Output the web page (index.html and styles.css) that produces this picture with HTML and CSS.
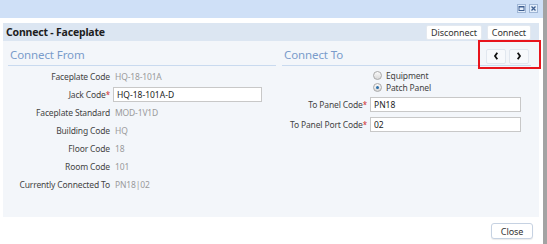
FILE: index.html
```html
<!DOCTYPE html>
<html lang="en">
<head>
    <meta charset="UTF-8">
    <meta name="viewport" content="width=device-width, initial-scale=1.0">
    <title>Connect - Faceplate</title>
    <link rel="stylesheet" href="styles.css">
</head>
<body>
    <div class="window">
        <div class="titlebar">
            <span class="win-icon">
                <svg width="9" height="9" viewBox="0 0 9 9"><rect x="0.5" y="0.5" width="8" height="8" fill="#e4eefb" stroke="#9fb6d6"/><rect x="2" y="2.5" width="5" height="4" fill="none" stroke="#3f5f91"/><rect x="2" y="2" width="5" height="1.5" fill="#3f5f91"/></svg>
            </span>
            <span class="win-icon">
                <svg width="9" height="9" viewBox="0 0 9 9"><rect x="0.5" y="0.5" width="8" height="8" fill="#e4eefb" stroke="#9fb6d6"/><path d="M2.5 2.5 L6.5 6.5 M6.5 2.5 L2.5 6.5" stroke="#3f5f91" stroke-width="1.3"/></svg>
            </span>
        </div>

        <div class="dialog">
            <div class="dialog-header">
                <h1>Connect - Faceplate</h1>
                <div class="actions">
                    <button class="btn">Disconnect</button>
                    <button class="btn">Connect</button>
                </div>
            </div>

            <div class="panel">
                <section class="col col-from">
                    <h2>Connect From</h2>
                    <div class="field">
                        <label>Faceplate Code</label>
                        <span class="value">HQ-18-101A</span>
                    </div>
                    <div class="field">
                        <label>Jack Code<span class="req">*</span></label>
                        <input type="text" class="text-input" value="HQ-18-101A-D">
                    </div>
                    <div class="field">
                        <label>Faceplate Standard</label>
                        <span class="value">MOD-1V1D</span>
                    </div>
                    <div class="field">
                        <label>Building Code</label>
                        <span class="value">HQ</span>
                    </div>
                    <div class="field">
                        <label>Floor Code</label>
                        <span class="value">18</span>
                    </div>
                    <div class="field">
                        <label>Room Code</label>
                        <span class="value">101</span>
                    </div>
                    <div class="field">
                        <label>Currently Connected To</label>
                        <span class="value">PN18|02</span>
                    </div>
                </section>

                <section class="col col-to">
                    <h2>
                        Connect To
                        <span class="nav">
                            <button class="nav-btn"><svg width="6" height="8" viewBox="0 0 6 8"><path d="M4.3 0.8 L2 4 L4.3 7.2" fill="none" stroke="#111" stroke-width="1.8"/></svg></button>
                            <button class="nav-btn"><svg width="6" height="8" viewBox="0 0 6 8"><path d="M1.7 0.8 L4 4 L1.7 7.2" fill="none" stroke="#111" stroke-width="1.8"/></svg></button>
                        </span>
                    </h2>
                    <div class="radios">
                        <label class="radio"><span class="radio-mark"></span>Equipment</label>
                        <label class="radio"><span class="radio-mark checked"></span>Patch Panel</label>
                    </div>
                    <div class="field field-to">
                        <label>To Panel Code<span class="req">*</span></label>
                        <input type="text" class="text-input" value="PN18">
                    </div>
                    <div class="field field-to">
                        <label>To Panel Port Code<span class="req">*</span></label>
                        <input type="text" class="text-input" value="02">
                    </div>
                </section>
            </div>

            <div class="footer">
                <button class="btn btn-close">Close</button>
            </div>
        </div>
    </div>

    <div class="highlight"></div>
</body>
</html>
```

FILE: styles.css
```css
body {
    margin: 0;
    width: 547px;
    height: 244px;
    overflow: hidden;
    font-family: "Noto Sans", "Open Sans", sans-serif;
    font-size: 8.5px;
    letter-spacing: -0.15px;
    color: #333;
    background-color: #ffffff;
    position: relative;
}

.window {
    height: 244px;
    border-right: 4px solid #a3a3a3;
    box-sizing: border-box;
    display: flex;
    flex-direction: column;
}

.titlebar {
    height: 18px;
    background-color: #cfe0f7;
    display: flex;
    justify-content: flex-end;
    align-items: flex-start;
    gap: 3px;
    padding: 4px 5px 0 0;
    box-sizing: border-box;
}

.win-icon {
    display: block;
    width: 9px;
    height: 9px;
}

.win-icon svg {
    display: block;
}

.dialog {
    flex: 1;
    display: flex;
    flex-direction: column;
    padding: 5px 4px 0 3px;
}

.dialog-header {
    height: 18px;
    background-color: #dce6f2;
    display: flex;
    justify-content: space-between;
    align-items: center;
    padding: 0 8px 0 3px;
}

h1 {
    margin: 0;
    font-size: 10.5px;
    font-weight: bold;
    letter-spacing: -0.2px;
    color: #1e1e1e;
}

.actions {
    display: flex;
    gap: 5px;
}

.btn {
    font-family: inherit;
    font-size: 9px;
    letter-spacing: -0.1px;
    color: #333;
    background-color: #ffffff;
    border: 1px solid #e4e9f0;
    border-radius: 2px;
    height: 15px;
    padding: 0 4px;
    line-height: 13px;
}

.panel {
    height: 176px;
    background-color: #f3f6fa;
    display: flex;
    gap: 6px;
    padding: 4px 8px 0 5px;
    box-sizing: border-box;
}

.col-from {
    width: 268px;
}

.col-to {
    width: 249px;
}

h2 {
    margin: 0 0 1px;
    height: 20px;
    line-height: 20px;
    font-size: 11.5px;
    font-weight: normal;
    letter-spacing: -0.1px;
    color: #7a9ccb;
    padding-left: 2px;
    border-bottom: 1px solid #c9daef;
    display: flex;
    justify-content: space-between;
    align-items: center;
}

.nav {
    display: flex;
    gap: 3px;
    margin-right: 2px;
    margin-top: 2px;
}

.nav-btn {
    width: 20px;
    height: 15px;
    padding: 0;
    background-color: #f7f9fc;
    border: 1px solid #e1e7ef;
    border-radius: 2px;
    display: flex;
    justify-content: center;
    align-items: center;
}

.nav-btn svg {
    display: block;
}

.field {
    display: flex;
    align-items: center;
    height: 18px;
}

.field label {
    width: 102px;
    text-align: right;
    color: #444;
    margin-right: 3px;
    white-space: nowrap;
}

.req {
    color: #d03030;
    font-size: 8px;
    vertical-align: top;
}

.value {
    color: #9a9a9a;
    padding-left: 2px;
}

.text-input {
    font-family: inherit;
    font-size: 8.5px;
    color: #222;
    width: 149px;
    height: 15px;
    box-sizing: border-box;
    border: 1px solid #c8c8c8;
    background-color: #ffffff;
    padding: 0 3px;
    margin: 0;
}

.radios {
    display: flex;
    flex-direction: column;
    padding: 2px 0 1px 91px;
}

.radio {
    display: flex;
    align-items: center;
    height: 12px;
    color: #444;
}

.radio-mark {
    width: 7px;
    height: 7px;
    border: 1px solid #a9a9a9;
    border-radius: 50%;
    background: linear-gradient(#fafafa, #d9d9d9);
    margin-right: 4px;
    display: flex;
    justify-content: center;
    align-items: center;
}

.radio-mark.checked::after {
    content: "";
    width: 3px;
    height: 3px;
    border-radius: 50%;
    background-color: #2b6ea8;
}

.field-to {
    height: 20px;
}

.field-to label {
    width: 85px;
}

.field-to .text-input {
    width: 151px;
}

.footer {
    flex: 1;
    display: flex;
    justify-content: flex-end;
    align-items: flex-start;
    padding: 6px 6px 0 0;
}

.btn-close {
    height: 16px;
    width: 42px;
    border: 1px solid #c6d2e2;
    border-radius: 3px;
    box-shadow: 0 1px 1px rgba(0, 0, 0, 0.08);
}

.highlight {
    position: absolute;
    left: 478px;
    top: 40px;
    width: 63px;
    height: 29px;
    border: 2px solid #e8141c;
    box-sizing: border-box;
}
```
